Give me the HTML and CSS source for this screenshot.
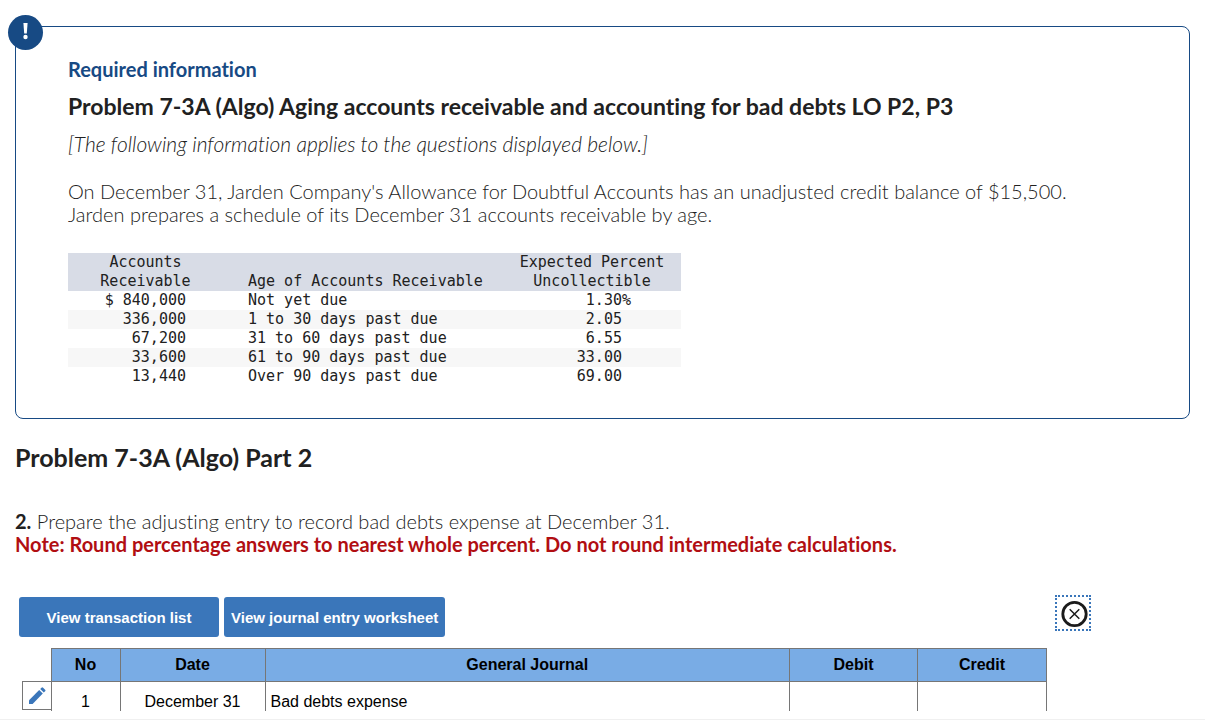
FILE: index.html
```html
<!DOCTYPE html>
<html lang="en">

<head>
  <meta charset="UTF-8">
  <meta name="viewport" content="width=device-width, initial-scale=1.0">
  <title>Problem 7-3A (Algo) Part 2</title>
  <link rel="stylesheet" href="styles.css">
</head>

<body>
  <section class="info">
    <div class="badge">
      <svg width="35" height="35" viewBox="0 0 35 35" aria-hidden="true">
        <path d="M15.4 8h4.2l-.8 10.5h-2.6z" fill="#fff" />
        <circle cx="17.5" cy="22" r="2.2" fill="#fff" />
      </svg>
    </div>
    <h4 class="info__label">Required information</h4>
    <h3 class="info__title">Problem 7-3A (Algo) Aging accounts receivable and accounting for bad debts LO P2, P3</h3>
    <p class="info__note">[The following information applies to the questions displayed below.]</p>
    <p class="info__text">On December 31, Jarden Company's Allowance for Doubtful Accounts has an unadjusted credit
      balance of $15,500.<br>Jarden prepares a schedule of its December 31 accounts receivable by age.</p>
    <table class="aging">
      <colgroup>
        <col class="aging__amount">
        <col class="aging__age">
        <col class="aging__percent">
      </colgroup>
      <thead>
        <tr>
          <th>Accounts<br>Receivable</th>
          <th>Age of Accounts Receivable</th>
          <th>Expected Percent<br>Uncollectible</th>
        </tr>
      </thead>
      <tbody>
        <tr>
          <td>$ 840,000</td>
          <td>Not yet due</td>
          <td>1.30%</td>
        </tr>
        <tr>
          <td>336,000</td>
          <td>1 to 30 days past due</td>
          <td>2.05&nbsp;</td>
        </tr>
        <tr>
          <td>67,200</td>
          <td>31 to 60 days past due</td>
          <td>6.55&nbsp;</td>
        </tr>
        <tr>
          <td>33,600</td>
          <td>61 to 90 days past due</td>
          <td>33.00&nbsp;</td>
        </tr>
        <tr>
          <td>13,440</td>
          <td>Over 90 days past due</td>
          <td>69.00&nbsp;</td>
        </tr>
      </tbody>
    </table>
  </section>

  <section class="question">
    <h2 class="question__title">Problem 7-3A (Algo) Part 2</h2>
    <p class="question__text"><strong>2.</strong> Prepare the adjusting entry to record bad debts expense at December
      31.</p>
    <p class="question__text question__warning">Note: Round percentage answers to nearest whole percent. Do not round
      intermediate calculations.</p>
  </section>

  <section class="worksheet">
    <div class="toolbar">
      <button type="button" class="btn">View transaction list</button>
      <button type="button" class="btn">View journal entry worksheet</button>
      <button type="button" class="close" aria-label="Close">
        <svg width="32" height="32" viewBox="0 0 32 32" fill="none" stroke="#1b1b1b">
          <circle cx="17.5" cy="17" r="11.7" stroke-width="2.8" />
          <path d="M12.7 12.2l9.6 9.6M22.3 12.2l-9.6 9.6" stroke-width="1.5" />
        </svg>
      </button>
    </div>
    <div class="journal__wrap">
      <table class="journal">
        <colgroup>
          <col class="journal__edit">
          <col class="journal__no">
          <col class="journal__date">
          <col>
          <col class="journal__debit">
          <col class="journal__credit">
        </colgroup>
        <thead>
          <tr>
            <td class="blank"></td>
            <th>No</th>
            <th>Date</th>
            <th>General Journal</th>
            <th>Debit</th>
            <th>Credit</th>
          </tr>
        </thead>
        <tbody>
          <tr>
            <td class="edit">
              <button type="button" class="edit__btn" aria-label="Edit">
                <svg width="18" height="18" viewBox="0 0 18 18" fill="#3a76ba">
                  <path d="M1 13.2L11.2 3l3.6 3.6L4.6 17H1z" />
                  <path d="M12.2 2l1.3-1.3q.8-.8 1.6 0l2 2q.8.8 0 1.6l-1.3 1.3z" />
                </svg>
              </button>
            </td>
            <td>1</td>
            <td>December 31</td>
            <td class="entry">Bad debts expense</td>
            <td></td>
            <td></td>
          </tr>
        </tbody>
      </table>
    </div>
  </section>
  <hr class="divider">
</body>

</html>
```

FILE: styles.css
```css
* {
  box-sizing: border-box;
}

body {
  margin: 0;
  background-color: #fff;
  color: #212121;
  font-family: Lato, "Open Sans", sans-serif;
  font-size: 20px;
  font-weight: 300;
  font-variant-ligatures: none;
  line-height: 23px;
}

h2,
h3,
h4,
p {
  margin: 0;
}

.info {
  position: relative;
  margin: 26px 15px 0;
  padding: 31px 52px 32px;
  border: 1px solid #174a84;
  border-radius: 8px;
}

/* sits over the top left corner of the box */
.badge {
  position: absolute;
  top: -12px;
  left: -8px;
  width: 35px;
  height: 35px;
  border-radius: 50%;
  background-color: #174a84;
}

.badge svg {
  display: block;
}

.info__label {
  color: #174a84;
  font-size: 20px;
  font-weight: 700;
}

.info__title {
  margin-top: 12px;
  font-size: 23px;
  font-weight: 700;
  line-height: 26px;
}

.info__note {
  margin-top: 13px;
  font-size: 21px;
  font-style: italic;
}

.info__text {
  margin-top: 25px;
}

.aging {
  width: 613px;
  max-width: 100%;
  margin-top: 27px;
  border-collapse: collapse;
  table-layout: fixed;
  font-family: "DejaVu Sans Mono", monospace;
  font-size: 15px;
  font-weight: 400;
  line-height: 19px;
}

.aging__amount {
  width: 155px;
}

.aging__percent {
  width: 178px;
}

.aging th {
  padding: 0;
  background-color: #d8dce6;
  font-weight: 400;
  vertical-align: bottom;
}

.aging td {
  padding: 0;
  text-align: right;
}

.aging td:first-child {
  padding-right: 37px;
}

.aging th:nth-child(2),
.aging td:nth-child(2) {
  padding-left: 25px;
  text-align: left;
}

.aging td:last-child {
  padding-right: 50px;
}

.aging tbody tr:nth-child(even) {
  background-color: #f7f7f7;
}

.question {
  padding: 24px 15px 0;
}

.question__title {
  margin-bottom: 39px;
  font-size: 25px;
  font-weight: 700;
  line-height: 28px;
}

.question__text strong {
  font-weight: 700;
}

.question__text.question__warning {
  color: #b10e12;
  font-weight: 700;
}

.worksheet {
  padding: 39px 114px 0 19px;
  color: #000;
  font-family: "Liberation Sans", Arial, sans-serif;
  font-weight: 400;
}

.toolbar {
  display: flex;
  align-items: flex-start;
  gap: 5px;
}

.btn {
  min-width: 200px;
  height: 40px;
  margin-top: 2px;
  padding: 0 7px;
  border: 0;
  border-radius: 3px;
  background-color: #3a76ba;
  color: #fff;
  font-family: inherit;
  font-size: 15px;
  font-weight: 700;
  cursor: pointer;
}

.close {
  width: 36px;
  height: 36px;
  margin-left: auto;
  padding: 0;
  border: 2px dotted #3a76ba;
  background: none;
  cursor: pointer;
}

.close svg {
  display: block;
}

/* only the top of the first row shows */
.journal__wrap {
  height: 63px;
  margin: 11px 44px 0 3px;
  overflow: hidden;
}

.journal {
  width: 100%;
  border-collapse: collapse;
  table-layout: fixed;
  font-size: 16px;
  line-height: 20px;
}

.journal__edit {
  width: 29px;
}

.journal__no {
  width: 69px;
}

.journal__date {
  width: 145px;
}

.journal__debit {
  width: 128px;
}

.journal__credit {
  width: 129px;
}

.journal th,
.journal td {
  height: 33px;
  padding: 0 5px;
  border: 1px solid #767676;
  text-align: center;
}

.journal th {
  background-color: #79ace5;
}

.journal tbody td {
  height: 40px;
}

.journal td.entry {
  text-align: left;
}

.journal td.blank {
  border-width: 0 1px 0 0;
}

.journal td.edit {
  padding: 0;
  border-width: 1px 1px 0 0;
  vertical-align: top;
}

.edit__btn {
  display: flex;
  align-items: center;
  justify-content: center;
  width: 100%;
  height: 28px;
  padding: 0;
  border: 1px solid #767676;
  border-width: 0 0 1px 1px;
  background-color: #fff;
  cursor: pointer;
}

.divider {
  margin: 8px 0 0;
  border: 0;
  border-top: 1px solid #f0f0f0;
}
```
